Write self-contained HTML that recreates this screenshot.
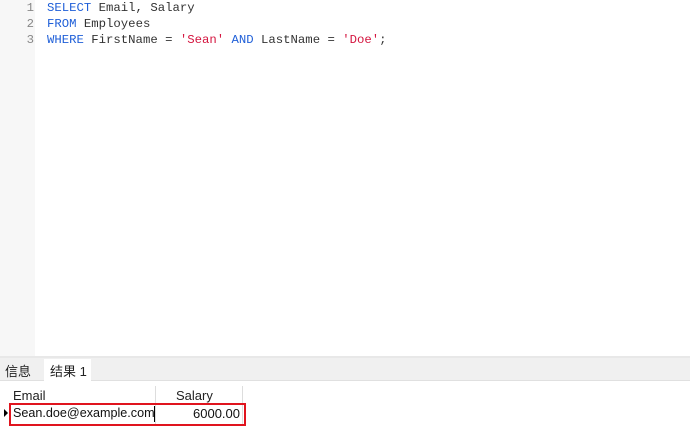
<!DOCTYPE html><html><head><style>
body{margin:0;width:690px;height:428px;background:#fff;position:relative;overflow:hidden;font-family:"Liberation Sans","Noto Sans CJK SC",sans-serif}
.g{position:absolute;left:0;top:0;width:35px;height:357px;background:#f7f7f7}
.ln{position:absolute;left:0;width:34px;text-align:right;font:12.3px "Liberation Mono",monospace;color:#888}
.c{position:absolute;left:47px;font:12.3px "Liberation Mono",monospace;color:#333;white-space:pre}
.k{color:#1f5fd8}.s{color:#d4153f}
.sep{position:absolute;left:0;top:356px;width:690px;height:2px;background:#e8e8e8}
.tb{position:absolute;left:0;top:358px;width:690px;height:22px;background:#f0f0f0;border-bottom:1px solid #e0e0e0}
.t{position:absolute;top:361px;font-size:13px;color:#222}
.tab{position:absolute;left:44px;top:359px;width:47px;height:22px;background:#fff}
.v{position:absolute;width:1px;background:#ddd}
</style></head><body>
<div class="g"></div>
<div class="ln" style="top:1px">1</div><div class="ln" style="top:17px">2</div><div class="ln" style="top:33px">3</div>
<div class="c" style="top:1px"><span class="k">SELECT</span> Email, Salary</div>
<div class="c" style="top:17px"><span class="k">FROM</span> Employees</div>
<div class="c" style="top:33px"><span class="k">WHERE</span> FirstName = <span class="s">'Sean'</span> <span class="k">AND</span> LastName = <span class="s">'Doe'</span>;</div>
<div class="sep"></div><div class="tb"></div><div class="tab"></div>
<div class="t" style="left:5px">信息</div><div class="t" style="left:50px">结果 1</div>
<div class="v" style="left:155px;top:386px;height:40px"></div>
<div class="v" style="left:242px;top:386px;height:40px"></div>
<div style="position:absolute;left:13px;top:388px;font-size:13px;color:#222">Email</div>
<div style="position:absolute;left:176px;top:388px;font-size:13px;color:#222">Salary</div>
<div style="position:absolute;left:4px;top:409px;width:0;height:0;border-left:4px solid #000;border-top:4px solid transparent;border-bottom:4px solid transparent"></div>
<div style="position:absolute;left:9px;top:403px;width:233px;height:19px;border:2px solid #e0141e"></div>
<div style="position:absolute;left:13px;top:406px;font-size:12.6px;color:#111">Sean.doe@example.com</div>
<div style="position:absolute;left:154px;top:406px;width:1px;height:16px;background:#000"></div>
<div style="position:absolute;right:450px;top:406px;font-size:13px;color:#111">6000.00</div>
</body></html>
